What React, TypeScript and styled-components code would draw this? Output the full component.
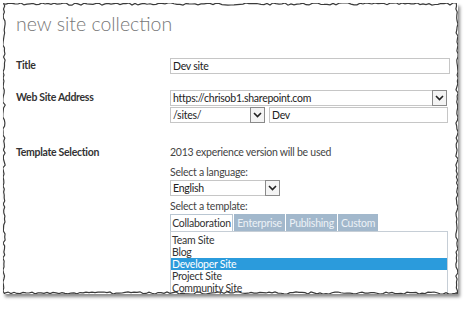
import React from 'react'
import styled, { createGlobalStyle } from 'styled-components'

const GlobalStyle = createGlobalStyle`
    html, body {
        margin: 0;
        padding: 0;
        background: #ffffff;
    }
    body {
        width: 474px;
        height: 312px;
        overflow: hidden;
        font-family: "Segoe UI", Lato, "Open Sans", sans-serif;
    }
`

const Page = styled.div`
    width: 474px;
    height: 312px;
    padding: 3px 16px 18px 3px;
    box-sizing: border-box;
`

const Panel = styled.div`
    position: relative;
    height: 100%;
    background: #ffffff;
    box-shadow: 2px 3px 3px rgba(0, 0, 0, 0.45);
    overflow: hidden;
    padding: 6px 0 0 13px;
    box-sizing: border-box;
`

const Edge = styled.svg`
    position: absolute;
    inset: 0;
    width: 100%;
    height: 100%;
    pointer-events: none;
`

const Heading = styled.h1`
    margin: 0 0 19px 0;
    font-size: 19.5px;
    font-weight: 300;
    color: #777777;
    line-height: 30px;
`

const Section = styled.div<{ gap?: number }>`
    display: grid;
    grid-template-columns: 154px 280px;
    margin-bottom: ${(p) => p.gap ?? 0}px;
`

const Label = styled.div`
    font-size: 10.5px;
    font-weight: 700;
    letter-spacing: -0.3px;
    color: #333333;
    line-height: 14px;
`

const Field = styled.div`
    display: flex;
    flex-direction: column;
    gap: 1px;
    font-size: 10.5px;
    letter-spacing: -0.25px;
`

const FieldRow = styled.div`
    display: flex;
    gap: 4px;
`

const TextBox = styled.div<{ w?: number }>`
    width: ${(p) => (p.w ? `${p.w}px` : '100%')};
    flex: ${(p) => (p.w ? 'none' : '1')};
    height: 16px;
    border: 1px solid #c6c6c6;
    box-sizing: border-box;
    color: #222222;
    line-height: 14px;
    padding-left: 2px;
    white-space: nowrap;
    overflow: hidden;
`

const SelectBox = styled.div<{ w: number }>`
    width: ${(p) => p.w}px;
    height: 16px;
    border: 1px solid #c6c6c6;
    box-sizing: border-box;
    display: flex;
    align-items: stretch;
    color: #222222;
    line-height: 14px;
`

const SelectText = styled.span`
    flex: 1;
    padding-left: 2px;
    white-space: nowrap;
    overflow: hidden;
`

const Arrow = styled.span`
    width: 13px;
    border: 1px solid #8a8a8a;
    margin: -1px -1px -1px 0;
    background: #f4f4f4;
    display: flex;
    align-items: center;
    justify-content: center;
`

const Note = styled.div<{ mt?: number }>`
    color: #444444;
    line-height: 14px;
    margin-top: ${(p) => p.mt ?? 0}px;
`

const TemplatePicker = styled.div`
    display: flex;
    flex-direction: column;
`

const Tabs = styled.div`
    display: flex;
    gap: 1px;
`

const Tab = styled.div<{ active?: boolean; w: number }>`
    width: ${(p) => p.w}px;
    height: 17px;
    box-sizing: border-box;
    line-height: 16px;
    text-align: center;
    white-space: nowrap;
    overflow: hidden;
    color: ${(p) => (p.active ? '#333333' : '#edf2f7')};
    background: ${(p) => (p.active ? '#ffffff' : '#a2b8cc')};
    border: 1px solid ${(p) => (p.active ? '#b9c6d2' : '#a2b8cc')};
    border-bottom: none;
`

const ListBox = styled.div`
    width: 278px;
    height: 72px;
    border: 1px solid #c6ced6;
    box-sizing: border-box;
    padding-top: 2px;
`

const ListItem = styled.div<{ selected?: boolean }>`
    line-height: 12px;
    height: 12px;
    padding-left: 1px;
    color: ${(p) => (p.selected ? '#ffffff' : '#333333')};
    background: ${(p) => (p.selected ? '#2b9bdc' : 'transparent')};
`

const Chevron = () => (
    <svg width="9" height="6" viewBox="0 0 9 6">
        <path d="M1 1 L4.5 4.5 L8 1" fill="none" stroke="#222" strokeWidth="1.6" />
    </svg>
)

const Select = ({ w, value }: { w: number; value: string }) => (
    <SelectBox w={w}>
        <SelectText>{value}</SelectText>
        <Arrow>
            <Chevron />
        </Arrow>
    </SelectBox>
)

// jagged torn-paper outline
const tornPath = (w: number, h: number) => {
    let seed = 7
    const rnd = () => {
        seed = (seed * 9301 + 49297) % 233280
        return seed / 233280
    }
    const pts: string[] = []
    const j = () => (rnd() - 0.5) * 2.4
    for (let x = 0; x <= w; x += 3) pts.push(`${x},${1 + j()}`)
    for (let y = 0; y <= h; y += 3) pts.push(`${w - 1 + j()},${y}`)
    for (let x = w; x >= 0; x -= 3) pts.push(`${x},${h - 1 + j()}`)
    for (let y = h; y >= 0; y -= 3) pts.push(`${1 + j()},${y}`)
    return pts.join(' ')
}

const templates = ['Team Site', 'Blog', 'Developer Site', 'Project Site', 'Community Site']

export default function App() {
    return (
        <Page>
            <GlobalStyle />
            <Panel>
                <Heading>new site collection</Heading>

                <Section gap={16}>
                    <Label>Title</Label>
                    <Field>
                        <TextBox>Dev site</TextBox>
                    </Field>
                </Section>

                <Section gap={22}>
                    <Label>Web Site Address</Label>
                    <Field>
                        <Select w={277} value="https://chrisob1.sharepoint.com" />
                        <FieldRow>
                            <Select w={95} value="/sites/" />
                            <TextBox w={179}>Dev</TextBox>
                        </FieldRow>
                    </Field>
                </Section>

                <Section>
                    <Label>Template Selection</Label>
                    <Field>
                        <Note>2013 experience version will be used</Note>
                        <Note mt={5}>Select a language:</Note>
                        <Select w={110} value="English" />
                        <Note mt={2}>Select a template:</Note>
                        <TemplatePicker>
                            <Tabs>
                                <Tab active w={63}>Collaboration</Tab>
                                <Tab w={51}>Enterprise</Tab>
                                <Tab w={51}>Publishing</Tab>
                                <Tab w={40}>Custom</Tab>
                            </Tabs>
                            <ListBox>
                                {templates.map((t) => (
                                    <ListItem key={t} selected={t === 'Developer Site'}>{t}</ListItem>
                                ))}
                            </ListBox>
                        </TemplatePicker>
                    </Field>
                </Section>

                <Edge viewBox="0 0 455 291" preserveAspectRatio="none">
                    <polyline points={tornPath(455, 291)} fill="none" stroke="#3a3a3a" strokeWidth="1.2" />
                </Edge>
            </Panel>
        </Page>
    )
}
